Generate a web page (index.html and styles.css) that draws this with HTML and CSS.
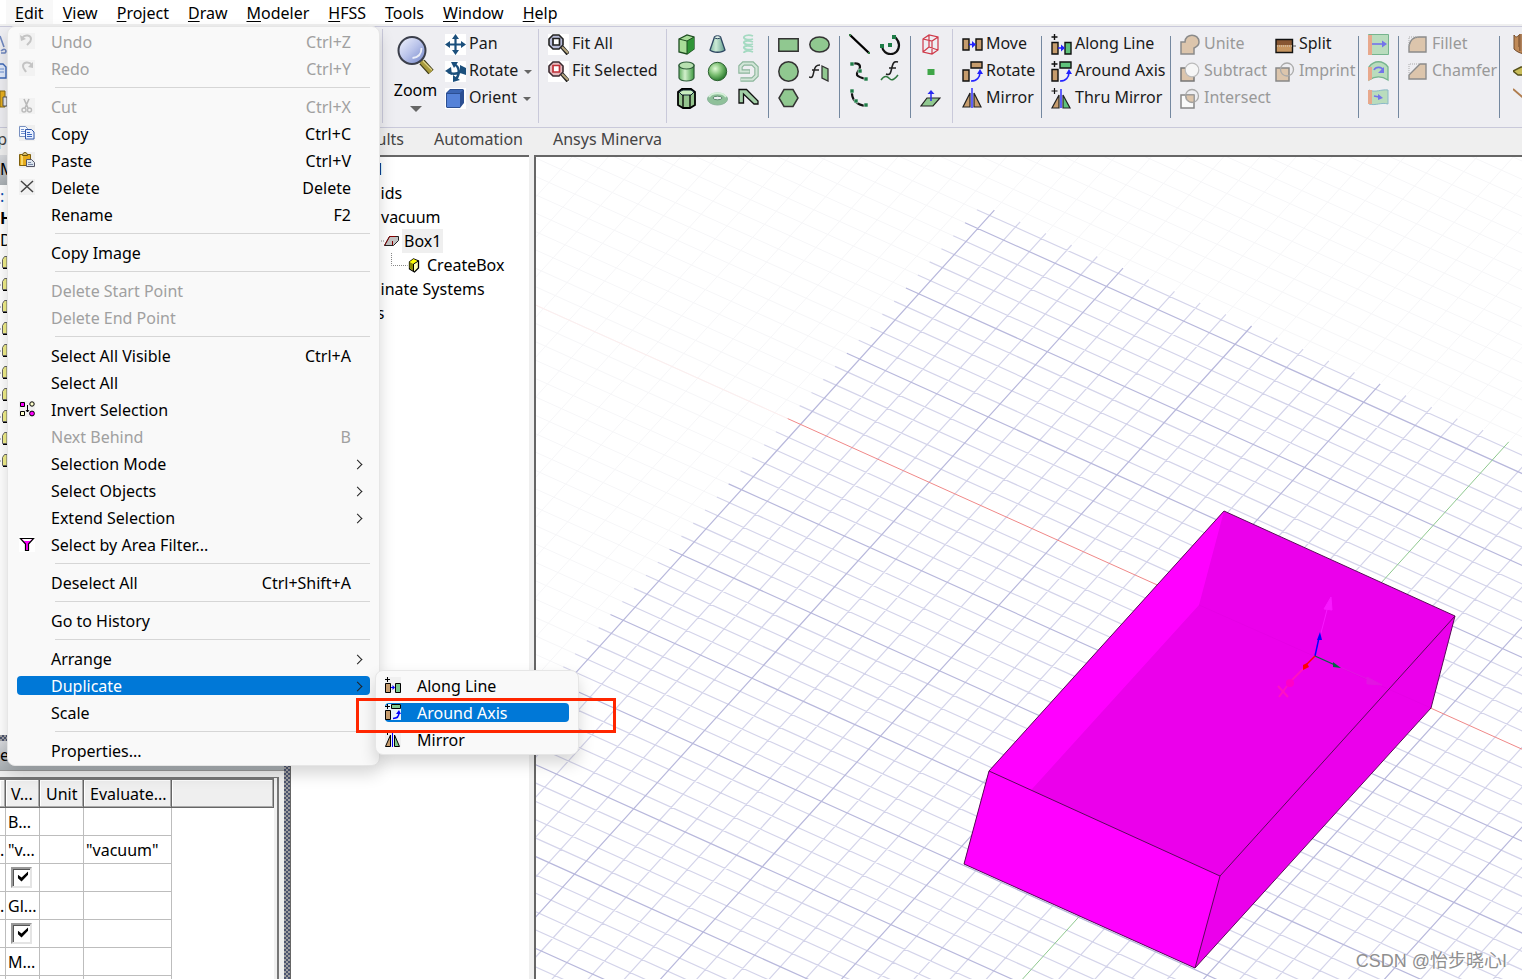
FILE: index.html
```html
<!DOCTYPE html>
<html lang="en">
<head>
<meta charset="utf-8">
<title>HFSS Modeler</title>
<link rel="stylesheet" href="styles.css">
</head>
<body>
<svg class="defs" aria-hidden="true">
  <defs>
    <linearGradient id="gLens" x1="0" y1="0" x2="1" y2="1"><stop offset="0" stop-color="#f4f6ff"/><stop offset=".5" stop-color="#b9c3ea"/><stop offset="1" stop-color="#6f83c9"/></linearGradient>
    <linearGradient id="gGreen" x1="0" x2="1"><stop offset="0" stop-color="#5fae5f"/><stop offset=".4" stop-color="#d2f0cc"/><stop offset="1" stop-color="#3f9a42"/></linearGradient>
    <radialGradient id="gBall" cx=".38" cy=".35" r=".65"><stop offset="0" stop-color="#e2fbd8"/><stop offset=".55" stop-color="#79bd70"/><stop offset="1" stop-color="#2f7d33"/></radialGradient>
    <linearGradient id="gCone" x1="0" x2="1"><stop offset="0" stop-color="#7fb5a0"/><stop offset=".4" stop-color="#ccebd6"/><stop offset="1" stop-color="#5f9a8c"/></linearGradient>
    <linearGradient id="gCopper" x1="0" x2="1"><stop offset="0" stop-color="#8a5a34"/><stop offset=".5" stop-color="#f5cfa8"/><stop offset="1" stop-color="#a06a40"/></linearGradient>
  </defs>
  <symbol id="i-zoom" viewBox="0 0 40 40"><path d="M26 27l9 10" stroke="#3d3a18" stroke-width="7"/><path d="M25 26l10 11" stroke="#a89a3c" stroke-width="4.500"/><path d="M27 26l9 9" stroke="#e0d488" stroke-width="1.300"/><circle cx="16" cy="15.500" r="13.500" fill="url(#gLens)" stroke="#3b3f4b" stroke-width="2"/><path d="M25.500 13c0 6-3 9.500-9 10" fill="none" stroke="#fff" stroke-width="1.800" opacity=".8"/></symbol>
  <symbol id="i-pan" viewBox="0 0 21 21"><path fill="#fff" d="M0 0h21v21H0z"/><path d="M10.500 2v17M2 10.500h17" stroke="#1b4f7c" stroke-width="2.200"/><path d="M10.500 0L14 5H7zM10.500 21L14 16H7zM0 10.500L5 7v7zM21 10.500L16 7v7z" fill="#1b4f7c"/></symbol>
  <symbol id="i-rot" viewBox="0 0 21 21"><path fill="#fff" d="M0 0h21v21H0z"/><path d="M9 3c6 3 6 10 2 15M3 11c5 3 10 2 15-2" fill="none" stroke="#1b4f7c" stroke-width="2.500"/><path d="M6 1h7l-4 6zM8 14v7l7-2zM0 10l6-4 1 8zM15 4l6 3v7l-6-2z" fill="#1b4f7c"/></symbol>
  <symbol id="i-orient" viewBox="0 0 21 21"><path fill="#fff" d="M0 0h21v21H0z"/><path d="M1 5l4-4h13l1 1v13l-4 5H2l-1-1z" fill="#2c4f92"/><path d="M2 6h13v13H2z" fill="#5582d8"/><path d="M2 5l3-3h13l-3 3z" fill="#3c66b4"/></symbol>
  <symbol id="i-fit" viewBox="0 0 21 21"><path fill="#fff" d="M0 0h21v21H0z"/><path d="M14 13l6 7" stroke="#222" stroke-width="4"/><path d="M14 13l6 6" stroke="#b8a880" stroke-width="2"/><path d="M5 1h6l4 4v6l-4 4H5l-4-4V5z" fill="#b8bcd8" stroke="#222" stroke-width="1.600"/><path d="M5 4.500h6.500v6.500H5z" fill="#fff" stroke="#222" stroke-width="1.700"/></symbol>
  <symbol id="i-fitsel" viewBox="0 0 21 21"><path fill="#fff" d="M0 0h21v21H0z"/><path d="M14 13l6 7" stroke="#222" stroke-width="4"/><path d="M14 13l6 6" stroke="#b8a880" stroke-width="2"/><path d="M5 1h6l4 4v6l-4 4H5l-4-4V5z" fill="#e6b8bc" stroke="#3a2a30" stroke-width="1.600"/><path d="M5 4.500h6.500v6.500H5z" fill="#fff" stroke="#c03038" stroke-width="1.700"/></symbol>
  <symbol id="i-box" viewBox="0 0 21 21"><path d="M3 5l8-4 7 2v12l-7 5-8-2z" fill="#a8dc98" stroke="#1d4d20" stroke-width="1.300"/><path d="M11 7l7-4v12l-7 5z" fill="#2f9436"/><path d="M3 5l8 2 7-4M11 7v13" fill="none" stroke="#1d4d20"/></symbol>
  <symbol id="i-cone" viewBox="0 0 21 21"><path d="M7.500 3h6l4.500 13c-3 3-12 3-15 0z" fill="url(#gCone)" stroke="#2c4560" stroke-width="1.300"/><ellipse cx="10.500" cy="3.200" rx="3" ry="1.500" fill="#dff0e8" stroke="#2c4560"/></symbol>
  <symbol id="i-helix" viewBox="0 0 21 21"><path d="M15 2c-5-2-10 0-9 2s6 2 9 1M15 8c-5-2-10-1-9 1s6 2 9 1M15 13c-5-2-10-1-9 1s6 2 9 1M15 18c-5-2-9-1-9 1" fill="none" stroke="#a5dac2" stroke-width="1.800"/></symbol>
  <symbol id="i-cyl" viewBox="0 0 21 21"><path d="M3 4v13c2 4 13 4 15 0V4z" fill="url(#gGreen)" stroke="#2d5c38" stroke-width="1.200"/><ellipse cx="10.500" cy="4.500" rx="7.500" ry="3.500" fill="#b7e0b0" stroke="#2d5c38" stroke-width="1.200"/></symbol>
  <symbol id="i-ball" viewBox="0 0 21 21"><circle cx="10.500" cy="10.500" r="9.200" fill="url(#gBall)" stroke="#2b6130"/></symbol>
  <symbol id="i-spiral" viewBox="0 0 21 21"><path d="M12 10.500H2.500V5.500l3-3h9l4 4v8l-4 4H2.500" fill="none" stroke="#8ab59a" stroke-width="4.400"/><path d="M11.500 10.500H2.500V5.500l3-3h9l4 4v8l-4 4H3" fill="none" stroke="#d2e6d8" stroke-width="2.200"/></symbol>
  <symbol id="i-prism" viewBox="0 0 21 21"><path d="M2 4l4-3h9l4 3v13l-5 3H7l-5-3z" fill="#94c48e" stroke="#000" stroke-width="1.800"/><path d="M3 4l4-2h8l3 2-3 3H6z" fill="#c8eebf" stroke="#123" /><path d="M7 7v13M14 7v13" stroke="#000" stroke-width="1.300"/></symbol>
  <symbol id="i-torus" viewBox="0 0 21 21"><ellipse cx="10.500" cy="11" rx="10" ry="6" fill="#8fc09a" stroke="#8ab39a"/><path d="M2 9c3-5 14-5 17 0" fill="none" stroke="#d4efd8" stroke-width="2"/><ellipse cx="10.500" cy="10" rx="4.500" ry="1.800" fill="#eeeef2" stroke="#5d8a70"/></symbol>
  <symbol id="i-bend" viewBox="0 0 21 21"><path d="M1 15V1.500h7.500L20 13v3h-4L5.500 6v9z" fill="#a2cfa6" stroke="#111" stroke-width="1.300"/></symbol>
  <symbol id="i-rect" viewBox="0 0 21 21"><path d="M.8 4.800h19.400v12.400H.8z" fill="#90c890" stroke="#333" stroke-width="1.500"/></symbol>
  <symbol id="i-ell" viewBox="0 0 21 21"><ellipse cx="10.500" cy="10.500" rx="9.700" ry="7.500" fill="#90c890" stroke="#333" stroke-width="1.500"/></symbol>
  <symbol id="i-circ" viewBox="0 0 21 21"><circle cx="10.500" cy="10.500" r="9.700" fill="#90c890" stroke="#333" stroke-width="1.500"/></symbol>
  <symbol id="i-fsheet" viewBox="0 0 21 21"><path d="M0 16c4 2 4-2 5-6s2-6 6-6M3 9h7" fill="none" stroke="#222" stroke-width="1.500"/><path d="M13 5l6 3v12l-6-3z" fill="#90c890" stroke="#333" stroke-width="1.300"/></symbol>
  <symbol id="i-hex" viewBox="0 0 21 21"><path d="M6 1.500h9l5 8.500-5 8.500H6L1 10z" fill="#90c890" stroke="#333" stroke-width="1.500"/></symbol>
  <symbol id="i-line" viewBox="0 0 21 21"><path d="M1 1l19 18" stroke="#000" stroke-width="2.400"/><path d="M0 0h2v2H0zM19 18h2v2h-2z" fill="#31793f"/></symbol>
  <symbol id="i-arc" viewBox="0 0 21 21"><path d="M2 12c1 11 17 11 17-1 0-3-2-6-4-8" fill="none" stroke="#111" stroke-width="2.200"/><path d="M6 0h7v8H0V5z" fill="#eeeef2"/><path d="M0 10h4v4H0zM8 9h4v4H8zM12 1h4v4h-4z" fill="#1e7c47"/></symbol>
  <symbol id="i-spline" viewBox="0 0 21 21"><path d="M2 3c4-1 9-1 9 3 0 3-4 5-3 8 1 2 5 3 9 4" fill="none" stroke="#111" stroke-width="2.200"/><path d="M1 1h4v4H1zM9 8h4v4H9zM15 16h4v4h-4z" fill="#1e7c47" stroke="#eeeef2" stroke-width=".6"/></symbol>
  <symbol id="i-fcurve" viewBox="0 0 21 21"><path d="M6 13c5 2 5-3 6-7s2-6 6-5M9 7h7" fill="none" stroke="#222" stroke-width="1.600"/><path d="M1 19c4-6 7-3 9-1s5 0 8-4" fill="none" stroke="#31793f" stroke-width="1.500"/></symbol>
  <symbol id="i-carc" viewBox="0 0 21 21"><path d="M3 2c-1 10 5 15 14 16" fill="none" stroke="#111" stroke-width="2.200"/><path d="M1 1h4v4H1zM5 11h4v4H5zM15 15h4v4h-4z" fill="#1e7c47" stroke="#eeeef2" stroke-width=".6"/></symbol>
  <symbol id="i-region" viewBox="0 0 21 21"><path d="M3 5l6-4 9 2v13l-6 4-9-2zM3 5l9 2 6-4M12 7v13M9 1v12l-6 5M9 13l9 3" fill="none" stroke="#cf3848" stroke-width="1.200"/></symbol>
  <symbol id="i-point" viewBox="0 0 21 21"><path d="M7.500 8h7v6h-7z" fill="#3fa648"/></symbol>
  <symbol id="i-plane" viewBox="0 0 21 21"><path d="M7 10h13l-7 8H1z" fill="#90c890" stroke="#222" stroke-width="1.200"/><path d="M11 13V5" stroke="#2a2af0" stroke-width="1.500"/><path d="M11 2l3.500 4h-7z" fill="#2a2af0"/></symbol>
  <symbol id="i-move" viewBox="0 0 21 21"><path d="M1 5h6v11H1zM14 5h6v11h-6z" fill="#c69c6d" stroke="#111" stroke-width="1.400"/><path d="M7 10.500h4" stroke="#22f" stroke-width="1.500"/><path d="M10 7l4 3.500-4 3.500z" fill="#22f"/></symbol>
  <symbol id="i-rotate" viewBox="0 0 21 21"><path d="M9 1h11v6H9zM1 9h6v11H1z" fill="#c69c6d" stroke="#111" stroke-width="1.400"/><path d="M9 20c6 0 9-4 9-9" fill="none" stroke="#22f" stroke-width="1.700"/><path d="M18 8l3 5h-6z" fill="#22f"/></symbol>
  <symbol id="i-mirror" viewBox="0 0 21 21"><path d="M8 5v14H1zM12 5v14h7z" fill="#c69c6d" stroke="#222" stroke-width="1.200"/><path d="M10 0v20" stroke="#22f" stroke-width="1.400"/></symbol>
  <symbol id="i-dline" viewBox="0 0 21 21"><path d="M1 8.500h6V20H1z" fill="#c69c6d" stroke="#111" stroke-width="1.400"/><path d="M14 8.500h6V20h-6z" fill="#5fc27c" stroke="#111" stroke-width="1.400"/><path d="M3.500 0v6M.5 3h6" stroke="#111" stroke-width="1.400"/><path d="M7 14h4" stroke="#22f" stroke-width="1.500"/><path d="M10 10.500l4 3.500-4 3.500z" fill="#22f"/></symbol>
  <symbol id="i-daxis" viewBox="0 0 21 21"><path d="M1 8.500h6V20H1z" fill="#c69c6d" stroke="#111" stroke-width="1.400"/><path d="M9 1h11v6H9z" fill="#5fc27c" stroke="#111" stroke-width="1.400"/><path d="M3.500 0v6M.5 3h6" stroke="#111" stroke-width="1.400"/><path d="M9 20c6 0 9-4 9-9" fill="none" stroke="#22f" stroke-width="1.700"/><path d="M18 8l3 5h-6z" fill="#22f"/></symbol>
  <symbol id="i-dmirror" viewBox="0 0 21 21"><path d="M8 7v13H1z" fill="#c69c6d" stroke="#222" stroke-width="1.200"/><path d="M12 7v13h7z" fill="#5fc27c" stroke="#222" stroke-width="1.200"/><path d="M3.500 0v6M.5 3h6" stroke="#111" stroke-width="1.200"/><path d="M10 1v19" stroke="#22f" stroke-width="1.400"/></symbol>
  <symbol id="m-dline" viewBox="0 0 16 16"><path d="M0 0h16v16H0z" fill="#f0f0f0"/><path d="M.5 6.500h5v9h-5z" fill="#c69c6d" stroke="#000"/><path d="M10.500 6.500h5v9h-5z" fill="#7cc88c" stroke="#000"/><path d="M2.500 0v5M0 2.500h5" stroke="#000"/><path d="M6 10.500h3" stroke="#00f"/><path d="M7.500 8l2.500 2.500L7.500 13z" fill="#00f"/></symbol>
  <symbol id="m-daxis" viewBox="0 0 16 16"><path d="M0 3l3-3h13v16H4l-4-3z" fill="#e8f2fb"/><path d="M.5 6.500h5v9h-5z" fill="#c69c6d" stroke="#000"/><path d="M6.500.5h9v4h-9z" fill="#7cc88c" stroke="#000"/><path d="M2.500 0v5M0 2.500h5" stroke="#000"/><path d="M8 14.500c4 0 6-2 6-6" fill="none" stroke="#00f" stroke-width="1.600"/><path d="M14 6l2 4h-5z" fill="#00f"/></symbol>
  <symbol id="m-dmirror" viewBox="0 0 16 16"><path d="M0 0h16v16H0z" fill="#f0f0f0"/><path d="M5.500 4v11.500H.5z" fill="#c69c6d" stroke="#000"/><path d="M9.500 4v11.500h5z" fill="#7cc88c" stroke="#000"/><path d="M2.500 0v4M0 1.500h5" stroke="#000"/><path d="M7.500 1v15" stroke="#00f"/></symbol>
  <symbol id="i-unite" viewBox="0 0 21 21"><path d="M1 8h4c0-9 14-9 14 0 0 4-3 5-5 6v6H1z" fill="#dcc5ac" stroke="#8b8b8b" stroke-width="1.500"/></symbol>
  <symbol id="i-sub" viewBox="0 0 21 21"><path d="M1 7h13v13H1z" fill="#dcc5ac" stroke="#777" stroke-width="1.500"/><circle cx="12" cy="9" r="6.800" fill="#f6f6f6" stroke="#bbb" stroke-width="1.200"/></symbol>
  <symbol id="i-int" viewBox="0 0 21 21"><path d="M1 7h13v13H1z" fill="#fafafa" stroke="#888" stroke-width="1.500"/><circle cx="12" cy="8" r="6.500" fill="none" stroke="#aaa" stroke-width="1.300"/><path d="M6 7h8v7c-5 1-8-2-8-7z" fill="#dcc5ac" stroke="#999"/></symbol>
  <symbol id="i-split" viewBox="0 0 21 21"><path d="M1 5h17v6H1z" fill="#875632"/><path d="M1 11h17v8H1z" fill="#c69560"/><path d="M1 5.500h16.500v13H1z" fill="none" stroke="#111" stroke-width="1.400"/><path d="M2 12h15" stroke="#d8d0c8" stroke-dasharray="1 1"/><path d="M18 12h3" stroke="#555"/></symbol>
  <symbol id="i-imprint" viewBox="0 0 21 21"><path d="M1 7h13v13H1z" fill="#dcc5ac" stroke="#888" stroke-width="1.500"/><circle cx="12" cy="8.500" r="6.500" fill="none" stroke="#aaa" stroke-width="1.300"/></symbol>
  <symbol id="i-sw1" viewBox="0 0 21 21"><path d="M.5.500h20v20H.5z" fill="#b9dcbd" stroke="#76b48e"/><path d="M0 1h4v20H0z" fill="#e8a88c"/><path d="M4 10h11" stroke="#7373ea" stroke-width="1.600"/><path d="M14 6.500l5 3.500-5 3.500z" fill="#7373ea"/></symbol>
  <symbol id="i-sw2" viewBox="0 0 21 21"><path d="M1 6c5-7 14-7 19 0v13c-6-4-13-4-19 0z" fill="#b9dcbd" stroke="#76b48e" stroke-width="1.300"/><path d="M0 6h4v12l-4 2z" fill="#e8a88c"/><path d="M6 9c2-4 8-3 9 0" fill="none" stroke="#7373ea" stroke-width="1.600"/><path d="M16 6v6h-6z" fill="#7373ea"/></symbol>
  <symbol id="i-sw3" viewBox="0 0 21 21"><path d="M1 2c7 3 12-1 19 0v14c-7-2-12 2-19 0z" fill="#b9dcbd" stroke="#8ab8c8"/><path d="M0 2h4v14H0z" fill="#e8a88c"/><path d="M6 8l5 1" stroke="#7373ea" stroke-width="1.500"/><path d="M10 6l5 4-5 2z" fill="#7373ea"/></symbol>
  <symbol id="i-fillet" viewBox="0 0 21 21"><path d="M1 18v-6c1-6 5-9 10-9h7v15z" fill="#dcc5ac" stroke="#8b8b8b" stroke-width="1.400"/><path d="M1 11V3h9" fill="none" stroke="#aaa" stroke-dasharray="1 1"/></symbol>
  <symbol id="i-chamfer" viewBox="0 0 21 21"><path d="M1 18v-4L12 3h6v15z" fill="#dcc5ac" stroke="#8b8b8b" stroke-width="1.400"/><path d="M1 12V3h10" fill="none" stroke="#aaa" stroke-dasharray="1 1"/></symbol>
  <symbol id="i-sheet1" viewBox="0 0 21 21"><path d="M1 1c2 3 3 2 5 0v12c4 3 8 3 12 0v5c-5 3-12 2-17-3z" fill="#c08a58" stroke="#714a2a"/><path d="M6 0h14v17H6z" fill="url(#gCopper)"/></symbol>
  <symbol id="i-sheet2" viewBox="0 0 21 21"><path d="M0 10l8-4h12l-5 8H5z" fill="#c9bd5a" stroke="#55501c" stroke-width="1.400"/></symbol>
  <symbol id="i-wire" viewBox="0 0 21 21"><path d="M0 1l21 18" stroke="#b07c4c" stroke-width="1.800"/></symbol>
  <symbol id="m-undo" viewBox="0 0 16 16"><path d="M0 0h16v16H0z" fill="#f2f2f2"/><path d="M3 5c3-4 9-3 9 1 0 3-2 4-4 6" fill="none" stroke="#c4c4c4" stroke-width="2"/><path d="M1 2l1 6 5-2z" fill="#c4c4c4"/></symbol>
  <symbol id="m-redo" viewBox="0 0 16 16"><path d="M0 0h16v16H0z" fill="#f2f2f2"/><path d="M13 5C10 1 4 2 4 6c0 3 2 4 3 6" fill="none" stroke="#c4c4c4" stroke-width="2"/><path d="M14 2l0 6-5-1z" fill="#c4c4c4"/></symbol>
  <symbol id="m-cut" viewBox="0 0 16 16"><path d="M0 0h16v16H0z" fill="#f2f2f2"/><path d="M5 1l4 9M10 1L6 10" stroke="#b8b8b8" stroke-width="1.600"/><circle cx="5" cy="12" r="2" fill="none" stroke="#bbb" stroke-width="1.400"/><circle cx="10.500" cy="12" r="2" fill="none" stroke="#bbb" stroke-width="1.400"/></symbol>
  <symbol id="m-copy" viewBox="0 0 16 16"><path d="M0 0h16v16H0z" fill="#efefef"/><path d="M.5 1.500h6l2 2v8h-8z" fill="#f4f8ff" stroke="#7890c0"/><path d="M2 4.500h3M2 6.500h4M2 8.500h4" stroke="#7090d0"/><path d="M6.500 4.500h6l2.500 2.500v7H6.500z" fill="#e8f0ff" stroke="#2f55a8"/><path d="M8 7.500h3M8 9.500h5M8 11.500h5" stroke="#3f6ac0"/></symbol>
  <symbol id="m-paste" viewBox="0 0 16 16"><path d="M0 0h16v16H0z" fill="#efefef"/><path d="M.5 2.500h11v11H.5z" fill="#e4aa1c" stroke="#80600c"/><path d="M2 3h2v10H2z" fill="#f8d868"/><path d="M3.500 3.500c0-4 5-4 5 0z" fill="#d8c070" stroke="#665010"/><path d="M7.500 7.500h5l3 3v4h-8z" fill="#dce4ee" stroke="#556"/><path d="M9 10.500h3M9 12.500h5" stroke="#7a8aa8"/></symbol>
  <symbol id="m-delete" viewBox="0 0 16 16"><path d="M0 0h16v16H0z" fill="#f0f0f0"/><path d="M2 2l12 11M14 2L2 13" stroke="#444" stroke-width="1.500"/></symbol>
  <symbol id="m-invert" viewBox="0 0 16 16"><path d="M0 0h16v16H0z" fill="#f0f0f0"/><path d="M1.500 1.500h4v4h-4z" fill="#f0f" stroke="#000"/><path d="M1.500 10.500h4v4h-4z" fill="#ffc" stroke="#000"/><circle cx="13" cy="3" r="2.200" fill="#ffc" stroke="#000"/><circle cx="13" cy="12.500" r="2.400" fill="#f0f" stroke="#000"/><path d="M8.500 4v7M7 9l1.500 2L10 9" fill="none" stroke="#000"/></symbol>
  <symbol id="m-filter" viewBox="0 0 16 16"><path d="M0 0h16v16H0z" fill="#fff"/><path d="M1.500 2.500h13L9.500 8v6.500h-3V8z" fill="#f0f" stroke="#000" stroke-width="1.200"/><path d="M3 3h10l-2 2H5z" fill="#fff"/></symbol>
  <symbol id="m-folder" viewBox="0 0 7 14"><path d="M0 8h1" stroke="#888"/><path d="M2.500 12.500v-8l2-3H7v11z" fill="#f2f08a" stroke="#666"/><path d="M3 13.500h4" stroke="#000"/></symbol>
</svg>

<header class="menubar">
  <nav class="menubar-items">
    <button class="top open"><u>E</u>dit</button><button class="top"><u>V</u>iew</button><button class="top"><u>P</u>roject</button><button class="top"><u>D</u>raw</button><button class="top"><u>M</u>odeler</button><button class="top"><u>H</u>FSS</button><button class="top"><u>T</u>ools</button><button class="top"><u>W</u>indow</button><button class="top"><u>H</u>elp</button>
  </nav>
  <ul class="menu edit-menu">
    <li><button disabled><svg><use href="#m-undo"/></svg><span>Undo</span><kbd>Ctrl+Z</kbd></button></li>
    <li><button disabled><svg><use href="#m-redo"/></svg><span>Redo</span><kbd>Ctrl+Y</kbd></button></li>
    <li class="sep"></li>
    <li><button disabled><svg><use href="#m-cut"/></svg><span>Cut</span><kbd>Ctrl+X</kbd></button></li>
    <li><button><svg><use href="#m-copy"/></svg><span>Copy</span><kbd>Ctrl+C</kbd></button></li>
    <li><button><svg><use href="#m-paste"/></svg><span>Paste</span><kbd>Ctrl+V</kbd></button></li>
    <li><button><svg><use href="#m-delete"/></svg><span>Delete</span><kbd>Delete</kbd></button></li>
    <li><button><span>Rename</span><kbd>F2</kbd></button></li>
    <li class="sep"></li>
    <li><button><span>Copy Image</span></button></li>
    <li class="sep"></li>
    <li><button disabled><span>Delete Start Point</span></button></li>
    <li><button disabled><span>Delete End Point</span></button></li>
    <li class="sep"></li>
    <li><button><span>Select All Visible</span><kbd>Ctrl+A</kbd></button></li>
    <li><button><span>Select All</span></button></li>
    <li><button><svg><use href="#m-invert"/></svg><span>Invert Selection</span></button></li>
    <li><button disabled><span>Next Behind</span><kbd>B</kbd></button></li>
    <li><button class="sub"><span>Selection Mode</span></button></li>
    <li><button class="sub"><span>Select Objects</span></button></li>
    <li><button class="sub"><span>Extend Selection</span></button></li>
    <li><button><svg><use href="#m-filter"/></svg><span>Select by Area Filter...</span></button></li>
    <li class="sep"></li>
    <li><button><span>Deselect All</span><kbd>Ctrl+Shift+A</kbd></button></li>
    <li class="sep"></li>
    <li><button><span>Go to History</span></button></li>
    <li class="sep"></li>
    <li><button class="sub"><span>Arrange</span></button></li>
    <li class="parent"><button class="sub active"><span>Duplicate</span></button>
      <ul class="menu submenu">
        <li><button><svg><use href="#m-dline"/></svg><span>Along Line</span></button></li>
        <li><button class="active"><svg><use href="#m-daxis"/></svg><span>Around Axis</span></button></li>
        <li><button><svg><use href="#m-dmirror"/></svg><span>Mirror</span></button></li>
      </ul>
      <div class="callout"></div>
    </li>
    <li><button><span>Scale</span></button></li>
    <li class="sep"></li>
    <li><button><span>Properties...</span></button></li>
  </ul>
</header>

<section class="ribbon">
  <div class="group clip">
    <svg viewBox="0 0 7 21"><path d="M0 2l4 11M1 17c4-4 6 0 4 2H1" fill="none" stroke="#7088c0" stroke-width="1.600"/></svg>
    <svg viewBox="0 0 7 21"><path d="M0 3h3l3 3v11H0" fill="#dfe9fb" stroke="#3e68b8" stroke-width="1.400"/><path d="M0 8h4M0 11h4" stroke="#6a8ed0"/></svg>
    <svg viewBox="0 0 7 21"><path d="M0 3h5v16H0z" fill="#e8b020" stroke="#8a6a10"/><path d="M3 9h4v9H3z" fill="#e8eaf0" stroke="#555"/></svg>
  </div>
  <div class="group view">
    <button class="big"><svg><use href="#i-zoom"/></svg><span>Zoom</span><i class="arrow"></i></button>
    <div class="col">
      <button class="tool"><svg><use href="#i-pan"/></svg>Pan</button>
      <button class="tool"><svg><use href="#i-rot"/></svg>Rotate<i class="arrow"></i></button>
      <button class="tool"><svg><use href="#i-orient"/></svg>Orient<i class="arrow"></i></button>
    </div>
  </div>
  <div class="group fit"><div class="col">
    <button class="tool"><svg><use href="#i-fit"/></svg>Fit All</button>
    <button class="tool"><svg><use href="#i-fitsel"/></svg>Fit Selected</button>
  </div></div>
  <div class="group solids">
    <div class="col"><button class="tool" aria-label="Box"><svg><use href="#i-box"/></svg></button><button class="tool" aria-label="Cylinder"><svg><use href="#i-cyl"/></svg></button><button class="tool" aria-label="Polyhedron"><svg><use href="#i-prism"/></svg></button></div>
    <div class="col"><button class="tool" aria-label="Cone"><svg><use href="#i-cone"/></svg></button><button class="tool" aria-label="Sphere"><svg><use href="#i-ball"/></svg></button><button class="tool" aria-label="Torus"><svg><use href="#i-torus"/></svg></button></div>
    <div class="col"><button class="tool" aria-label="Helix"><svg><use href="#i-helix"/></svg></button><button class="tool" aria-label="Spiral"><svg><use href="#i-spiral"/></svg></button><button class="tool" aria-label="Bondwire"><svg><use href="#i-bend"/></svg></button></div>
  </div>
  <div class="group inner pair">
    <div class="col"><button class="tool" aria-label="Rectangle"><svg><use href="#i-rect"/></svg></button><button class="tool" aria-label="Circle"><svg><use href="#i-circ"/></svg></button><button class="tool" aria-label="Polygon"><svg><use href="#i-hex"/></svg></button></div>
    <div class="col"><button class="tool" aria-label="Ellipse"><svg><use href="#i-ell"/></svg></button><button class="tool" aria-label="Equation surface"><svg><use href="#i-fsheet"/></svg></button></div>
  </div>
  <div class="group inner pair">
    <div class="col"><button class="tool" aria-label="Line"><svg><use href="#i-line"/></svg></button><button class="tool" aria-label="Spline"><svg><use href="#i-spline"/></svg></button><button class="tool" aria-label="Arc"><svg><use href="#i-carc"/></svg></button></div>
    <div class="col"><button class="tool" aria-label="Center arc"><svg><use href="#i-arc"/></svg></button><button class="tool" aria-label="Equation curve"><svg><use href="#i-fcurve"/></svg></button></div>
  </div>
  <div class="group inner refs"><div class="col">
    <button class="tool" aria-label="Region"><svg><use href="#i-region"/></svg></button><button class="tool" aria-label="Point"><svg><use href="#i-point"/></svg></button><button class="tool" aria-label="Plane"><svg><use href="#i-plane"/></svg></button>
  </div></div>
  <div class="group move"><div class="col">
    <button class="tool"><svg><use href="#i-move"/></svg>Move</button><button class="tool"><svg><use href="#i-rotate"/></svg>Rotate</button><button class="tool"><svg><use href="#i-mirror"/></svg>Mirror</button>
  </div></div>
  <div class="group inner dup"><div class="col">
    <button class="tool"><svg><use href="#i-dline"/></svg>Along Line</button><button class="tool"><svg><use href="#i-daxis"/></svg>Around Axis</button><button class="tool"><svg><use href="#i-dmirror"/></svg>Thru Mirror</button>
  </div></div>
  <div class="group inner bool">
    <div class="col"><button class="tool" disabled><svg><use href="#i-unite"/></svg>Unite</button><button class="tool" disabled><svg><use href="#i-sub"/></svg>Subtract</button><button class="tool" disabled><svg><use href="#i-int"/></svg>Intersect</button></div>
    <div class="col"><button class="tool"><svg><use href="#i-split"/></svg>Split</button><button class="tool" disabled><svg><use href="#i-imprint"/></svg>Imprint</button></div>
  </div>
  <div class="group inner sweep"><div class="col">
    <button class="tool" aria-label="Sweep along vector"><svg><use href="#i-sw1"/></svg></button><button class="tool" aria-label="Sweep around axis"><svg><use href="#i-sw2"/></svg></button><button class="tool" aria-label="Sweep along path"><svg><use href="#i-sw3"/></svg></button>
  </div></div>
  <div class="group inner edge"><div class="col">
    <button class="tool" disabled><svg><use href="#i-fillet"/></svg>Fillet</button><button class="tool" disabled><svg><use href="#i-chamfer"/></svg>Chamfer</button>
  </div></div>
  <div class="group inner last"><div class="col">
    <button class="tool" aria-label="Sheet"><svg><use href="#i-sheet1"/></svg></button><button class="tool" aria-label="Cover"><svg><use href="#i-sheet2"/></svg></button><button class="tool" aria-label="Wire"><svg><use href="#i-wire"/></svg></button>
  </div></div>
</section>

<nav class="tabs">
  <div class="tabs-left"><span>p</span><button>Results</button></div>
  <button>Automation</button><button>Ansys Minerva</button>
</nav>

<main class="work">
  <aside class="left">
    <section class="manager">
      <h2 class="panel-title">M</h2>
      <ul class="projects">
        <li class="blue">:</li><li class="bold">H</li><li>D</li>
        <li><svg><use href="#m-folder"/></svg></li><li><svg><use href="#m-folder"/></svg></li><li><svg><use href="#m-folder"/></svg></li><li><svg><use href="#m-folder"/></svg></li><li><svg><use href="#m-folder"/></svg></li><li><svg><use href="#m-folder"/></svg></li><li><svg><use href="#m-folder"/></svg></li><li><svg><use href="#m-folder"/></svg></li><li><svg><use href="#m-folder"/></svg></li><li><svg><use href="#m-folder"/></svg></li>
      </ul>
    </section>
    <div class="hsplit"></div>
    <section class="props">
      <h2 class="panel-title">es</h2>
      <div class="frame">
        <table>
          <colgroup><col class="c0"><col class="c1"><col class="c2"><col class="c3"><col></colgroup>
          <thead><tr><th></th><th>V...</th><th>Unit</th><th>Evaluate...</th><th></th></tr></thead>
          <tbody>
            <tr><td></td><td>B...</td><td></td><td></td><td></td></tr>
            <tr><td>.</td><td>"v...</td><td></td><td>"vacuum"</td><td></td></tr>
            <tr><td></td><td><input type="checkbox" checked aria-label="Solve inside"></td><td></td><td></td><td></td></tr>
            <tr><td>.</td><td>Gl...</td><td></td><td></td><td></td></tr>
            <tr><td></td><td><input type="checkbox" checked aria-label="Model"></td><td></td><td></td><td></td></tr>
            <tr><td></td><td>M...</td><td></td><td></td><td></td></tr>
            <tr><td></td><td></td><td></td><td></td><td></td></tr>
          </tbody>
        </table>
      </div>
    </section>
  </aside>
  <div class="vsplit"></div>
  <section class="tree">
    <ul>
      <li class="l1">Model</li>
      <li class="l2">Solids</li>
      <li class="l3">vacuum</li>
      <li class="l3"><svg class="tnode" viewBox="0 0 21 24"><path d="M0 12h3" stroke="#888" stroke-dasharray="1 1"/><path d="M3.500 16.500l5-9h9v4l-5 5z" fill="#c4c4c4" stroke="#222"/><path d="M3.500 16.500l5-9h6M11.500 12v4" fill="none" stroke="#800"/></svg><span class="sel">Box1</span></li>
      <li class="l3"><svg class="tleaf" viewBox="0 0 46 24"><path d="M10.500 0v12.500h16" fill="none" stroke="#888" stroke-dasharray="1 1"/><path d="M28.500 9l4-3 5 2v7l-4 4-5-3z" fill="#ffffb0" stroke="#000" stroke-width="1.300"/><path d="M28.500 9l4-3 4 2-4 3z" fill="#ff0"/><path d="M28.500 9l4 2v7l-4-3z" fill="#8a8a00"/><path d="M32.500 11v7M32.500 11l5-3" stroke="#000"/></svg>CreateBox</li>
      <li class="l1">Coordinate Systems</li>
      <li class="l1">Planes</li>
    </ul>
  </section>
  <section class="view3d">
    <svg class="scene">
      <g transform="translate(-536 -157)">
        <g id="grid"></g>
        <path d="M1224 511L1455 616 1431 708 1195 968 964 864 989 771z" fill="#eb00eb"/>
        <path d="M1224 511L989 771 964 864 1199 605zM989 771L964 864 1195 968 1220 876z" fill="#f0f"/>
        <path d="M1199 605L1431 708" stroke="#e600e6" stroke-width="1"/>
        <path d="M1224 511L1455 616 1431 708 1195 968 964 864 989 771zM989 771L1220 876 1455 616M1220 876L1195 968" fill="none" stroke="#5a0a5a" stroke-width="1"/>
        <path d="M1315 656L1328 606M1331 597L1324 609 1332 610z" stroke="#f818ff" fill="#f818ff"/>
        <path d="M1315 656L1372 681M1382 685L1367 677 1367 684z" stroke="#e214e2" fill="#e214e2"/>
        <path d="M1304 668L1288 684M1278 686l10 11M1287 686l-8 11" stroke="#ff10c4" stroke-width="2"/><circle cx="1290" cy="683" r="4" fill="#ff00c8"/>
        <path d="M1315 656l4-18" stroke="#00f" stroke-width="1.500"/><path d="M1320 632l-3 8h5z" fill="#00f"/>
        <path d="M1315 656l20 9" stroke="#064" stroke-width="1.300"/><path d="M1341 668l-8-6 0 5z" fill="#064"/>
        <path d="M1315 656l-8 8" stroke="#f00" stroke-width="1.500"/><path d="M1303 670l0-5 4-2 2 4z" fill="#f00"/>
      </g>
    </svg>
    <p class="credit">CSDN @怡步晓心I</p>
  </section>
</main>
<script src="grid.js"></script>
</body>
</html>
```

FILE: grid.js
```js
// Ground-plane grid: five minor cells to each major one.
const NS = "http://www.w3.org/2000/svg";
const origin = [1315, 656];
const u = [128.6, 57.9];
const v = [-59.1, 65.3];
const grid = document.getElementById("grid");

function point(a, b) {
  return [origin[0] + a * u[0] + b * v[0], origin[1] + a * u[1] + b * v[1]];
}

function path(segments, cls) {
  const el = document.createElementNS(NS, "path");
  el.setAttribute("class", cls);
  el.setAttribute("d", segments.map(([p, q]) => `M${p[0].toFixed(1)} ${p[1].toFixed(1)}L${q[0].toFixed(1)} ${q[1].toFixed(1)}`).join(""));
  grid.appendChild(el);
}

const far = [], minor = [], major = [];
for (let i = -60; i <= 60; i++) {
  const k = i / 5;
  far.push([point(k, -14), point(k, k < -4 ? 14 : -3.3)]);
  far.push([point(-14, k), point(k < -3.2 ? 14 : -4.1, k)]);
  const bucket = i % 5 === 0 ? major : minor;
  if (i >= -20 && i !== 0) bucket.push([point(k, -3.28), point(k, 14)]);
  if (i >= -16 && i !== 0) bucket.push([point(-4.1, k), point(14, k)]);
}
path(far, "far");
path(minor, "minor");
path(major, "major");
path([[point(-14, 0), point(-4.1, 0)]], "x-far");
path([[point(-4.1, 0), point(14, 0)]], "x-axis");
path([[point(0, -3.28), point(0, 14)]], "y-axis");
```

FILE: styles.css
```css
* { box-sizing: border-box; }
body { margin: 0; height: 100vh; display: flex; flex-direction: column; overflow: hidden; background: #efefef; color: #000; font: 16px/24px "Noto Sans", "Noto Sans CJK SC", sans-serif; }
ul { list-style: none; margin: 0; padding: 0; }
button { border: 0; padding: 0; background: none; font: inherit; color: inherit; text-align: left; white-space: nowrap; }
svg { display: block; flex: none; }
.defs { position: absolute; width: 0; height: 0; }

.menubar { position: relative; z-index: 5; flex: none; height: 26px; background: #fff; border-bottom: 2px solid #efefef; }
.menubar-items { display: flex; gap: 1px; padding-left: 6px; }
.top { padding: 0 9px; height: 24px; line-height: 26px; }
.top.open { background: #f8f8f8; }
u { text-underline-offset: 2px; text-decoration-thickness: 1px; }

.menu { position: absolute; background: #f9f9f9; border: 1px solid #e6e6e6; border-radius: 8px; padding: 1px 9px; box-shadow: 0 8px 16px rgba(0, 0, 0, .16); }
.edit-menu { left: 7px; top: 26px; width: 373px; }
.menu li { padding: 4px 0; }
.menu .sep { padding: 5px 0; }
.menu .sep::before { content: ""; display: block; height: 1px; margin-left: 38px; background: #d6d6d6; }
.menu button { display: grid; grid-template-columns: 16px 1fr auto; column-gap: 16px; align-items: start; width: 100%; height: 19px; line-height: 21px; padding: 0 19px 0 2px; border-radius: 4px; }
.menu button svg { width: 16px; height: 16px; margin-top: 1px; }
.menu button span { grid-column: 2; }
.menu kbd { font: inherit; }
.menu button:disabled { color: #a0a0a0; }
.menu button.active { background: #0078d7; color: #fff; }
.menu .sub { padding-right: 9px; }
.menu .sub::after { content: ""; align-self: center; width: 6px; height: 6px; border: solid #222; border-width: 1px 1px 0 0; transform: rotate(45deg); }
.menu .parent { position: relative; }
.menu .submenu { left: 358px; top: -2px; width: 204px; }
.submenu button { padding-left: 0; }
.callout { position: absolute; left: 339px; top: 26px; width: 260px; height: 35px; border: 3px solid #ff2600; pointer-events: none; }

.ribbon { flex: none; display: flex; height: 102px; background: #eeeef2; border: solid #c9c9da; border-width: 1px 0; overflow: hidden; }
.group { flex: none; display: flex; gap: 10px; margin: 2px 0 4px; padding: 2px 0 0 9px; border-left: 1px solid #c9c9da; }
.group.inner { border-left-color: transparent; background: linear-gradient(#7488a0, #7488a0) -1px 7px / 1px 82px no-repeat border-box; background-origin: padding-box; }
.col { display: flex; flex-direction: column; }
.tool { display: flex; align-items: flex-start; gap: 3px; height: 27px; line-height: 25px; min-width: 21px; color: #1a1a1a; }
.tool svg { width: 21px; height: 21px; margin-top: 3px; }
.tool .arrow { margin: 12px 0 0 3px; }
.tool:disabled { color: #999; }
.arrow { width: 0; border: solid transparent; border-width: 4px 4px 0; border-top-color: #666; }
.clip { width: 382px; border: 0; padding-left: 0; flex-direction: column; gap: 6px; padding-top: 5px; }
.clip svg { width: 7px; height: 21px; }
.view { width: 156px; padding-left: 11px; gap: 8px; }
.big { display: flex; flex-direction: column; align-items: center; width: 43px; padding-top: 4px; }
.big svg { width: 40px; height: 40px; margin-bottom: 3px; }
.big .arrow { border-width: 6px 6px 0; margin-top: 4px; }
.fit { width: 128px; }
.solids { width: 102px; }
.pair { width: 71px; }
.refs { width: 42px; }
.move { width: 89px; }
.dup { width: 129px; }
.bool { width: 188px; gap: 4px; }
.sweep { width: 40px; }
.edge { width: 101px; }
.last { flex: 1; padding-left: 13px; }

.tabs { flex: none; display: flex; height: 27px; gap: 30px; color: #444; line-height: 22px; }
.tabs button { height: 22px; }
.tabs-left { display: flex; justify-content: space-between; width: 404px; }
.tabs-left span { width: 7px; direction: rtl; overflow: hidden; }

.work { flex: 1; min-height: 0; display: flex; }
.left { flex: none; width: 284px; display: flex; flex-direction: column; }
.panel-title { margin: 0; height: 30px; font-size: 16px; font-weight: 400; line-height: 28px; background: linear-gradient(#d8dade, #a9afb3); overflow: hidden; }
.manager { height: 580px; background: #fff; overflow: hidden; }
.projects { line-height: 22px; }
.projects li { height: 22px; }
.projects .blue { color: #0a50b0; }
.projects .bold { font-weight: 700; }
.projects svg { width: 7px; height: 22px; }
.hsplit, .vsplit { background: repeating-conic-gradient(#4c5470 0 25%, #a0a0a0 0 50%) 0 0 / 4px 4px; }
.hsplit { height: 6px; }
.props { flex: 1; min-height: 0; display: flex; flex-direction: column; overflow: hidden; }
.props .panel-title { flex: none; border-bottom: 1px solid #999; }
.frame { flex: 1; min-height: 0; margin: 6px 5px 0 0; padding-right: 3px; border: solid #777; border-width: 1px 2px 0 0; background: #f0f0f0; overflow: hidden; }
table { width: 100%; table-layout: fixed; border-collapse: separate; border-spacing: 0; background: #fff; border-top: 2px solid #777; }
.c0 { width: 6px; } .c1 { width: 34px; } .c2 { width: 44px; } .c3 { width: 88px; }
th, td { height: 28px; padding: 0 0 0 2px; font-weight: 400; text-align: left; white-space: nowrap; line-height: 20px; overflow: hidden; }
th { padding-left: 6px; background: #efefef; border-right: 1px solid #666; border-bottom: 1px solid #666; box-shadow: inset -1px -1px #aaa, inset 1px 1px #fff; }
th:nth-child(2) { padding-left: 5px; }
td { border-right: 1px solid #bdbdbd; border-bottom: 1px solid #bdbdbd; }
td:first-child, th:first-child { padding-left: 0; }
td:last-child { border: 0; }
input[type="checkbox"] { appearance: none; display: block; width: 21px; height: 21px; margin: 0 0 0 3px; border: 2px solid; border-color: #999 #e4e4e4 #e4e4e4 #999; box-shadow: inset 1px 1px #555; background: #fff; padding: 2px 0 0 4px; }
input[type="checkbox"]::before { content: ""; display: block; width: 12px; height: 11px; background: #000; clip-path: polygon(8% 35%, 38% 60%, 92% 5%, 92% 35%, 38% 95%, 8% 65%); }
.vsplit { flex: none; width: 7px; border-right: 1px solid #666; }
.tree { flex: none; width: 238px; background: #fff; border: solid #666; border-width: 2px 0 0; overflow: hidden; }
.tree li { display: flex; height: 24px; }
.l1 { padding-left: 44px; } .l2 { padding-left: 67px; } .l3 { padding-left: 90px; }
.tnode { width: 21px; height: 24px; }
.sel { padding: 0 2px; background: #efefef; }
.tleaf { width: 46px; height: 24px; }
.view3d { flex: 1; min-width: 0; position: relative; margin-left: 5px; background: #fff; border: solid #666; border-width: 2px 0 0 2px; overflow: hidden; }
.scene { width: 100%; height: 100%; }
.credit { position: absolute; right: 15px; bottom: 6px; margin: 0; font-family: "Liberation Sans", "Noto Sans CJK SC", sans-serif; font-size: 18px; color: #8f8f8f; text-shadow: 1px 1px #fff; }
#grid path { fill: none; stroke-width: 1; }
#grid .far { stroke: #f6f6f8; }
#grid .minor { stroke: #d4d4ea; stroke-width: 1.200; }
#grid .major { stroke: #b8b8dc; stroke-width: 1.200; }
#grid .x-far { stroke: #fdeeee; }
#grid .x-axis { stroke: #f08888; }
#grid .y-axis { stroke: #8ec88e; }
```
